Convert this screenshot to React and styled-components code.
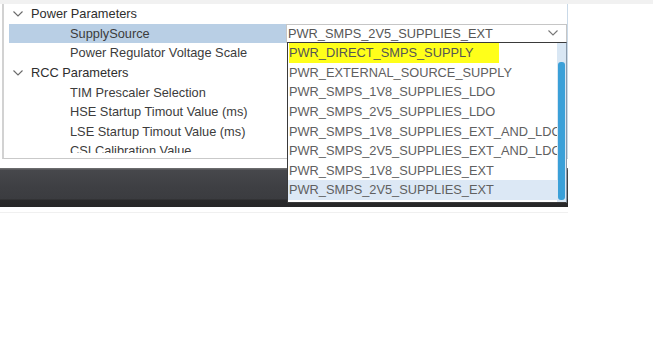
import React from 'react'
import styled, { createGlobalStyle } from 'styled-components'

const GlobalStyle = createGlobalStyle`
  html, body {
    margin: 0;
    padding: 0;
    background: #ffffff;
  }
  body {
    font-family: "Liberation Sans", Arial, sans-serif;
    font-size: 12.8px;
  }
`

const ROW = 19.6

const Page = styled.div`
  width: 653px;
  height: 341px;
  overflow: hidden;
  background: #fff;
`

const TopStrip = styled.div`
  height: 4px;
  background: #f1f1f1;
`

const Shot = styled.div`
  position: relative;
  width: 568px;
`

const Panel = styled.div`
  margin-left: 2px;
  padding-bottom: 5px;
  border-left: 2px solid #d2d2d2;
  border-bottom: 1px solid #c9c9c9;
  border-right: 1px solid #c9d9e8;
  background: #fff;
`

const Tree = styled.div`
  height: 149px;
  overflow: hidden;
`

const Row = styled.div`
  display: grid;
  grid-template-columns: 277px 1fr;
  height: ${ROW}px;
  padding-left: 5px;
  align-items: stretch;
`

const Label = styled.div`
  display: flex;
  align-items: center;
  padding-left: ${(p) => (p.$child ? 61 : 3)}px;
  background: ${(p) => (p.$selected ? '#b9cfe5' : 'transparent')};
  color: ${(p) => (p.$child ? '#3c3c3c' : '#2e2e2e')};
  white-space: nowrap;
`

const Toggle = styled.svg`
  width: 10px;
  height: 6px;
  margin-right: 8px;
  margin-left: 1px;
`

const Value = styled.div`
  display: flex;
`

const Combo = styled.div`
  flex: 1;
  display: flex;
  align-items: center;
  justify-content: space-between;
  border: 1px solid #c6c6c6;
  padding: 0 8px 0 1px;
  color: #565656;
  background: #fff;
`

const DarkBar = styled.div`
  margin-top: 9px;
  height: 39px;
  background: linear-gradient(
    to bottom,
    #6b6b6d 0px,
    #6b6b6d 1px,
    #47484c 2px,
    #3e3f43 20px,
    #3b3c40 31px,
    #2a2a2b 32px,
    #262627 39px
  );
`

const BottomLine = styled.div`
  margin-top: 5px;
  height: 1px;
  background: #f0f0f0;
`

const List = styled.div`
  position: absolute;
  left: 287px;
  top: 38px;
  width: 278px;
  height: ${8 * ROW + 2}px;
  border: 1px solid #3a3a3a;
  border-right-color: #8a9aaa;
  background: #fff;
  display: flex;
`

const Items = styled.div`
  flex: 1;
  min-width: 0;
  overflow: hidden;
  display: flex;
  flex-direction: column;
`

const Item = styled.div`
  height: ${ROW}px;
  flex-shrink: 0;
  display: flex;
  align-items: center;
  padding-left: 1px;
  color: #606060;
  white-space: nowrap;
  overflow: hidden;
  background: ${(p) => (p.$selected ? '#dce8f5' : 'transparent')};
`

const Mark = styled.span`
  display: flex;
  align-items: center;
  height: 100%;
  width: 210px;
  flex-shrink: 0;
  background: #ffff1a;
  color: #555;
`

const Track = styled.div`
  width: 9px;
  flex-shrink: 0;
  box-sizing: border-box;
  background: #d9e7f4;
  padding: 19px 1px 2px 1px;
  display: flex;
`

const Thumb = styled.div`
  flex: 1;
  background: #3ba0d8;
  border-radius: 3px;
`

const Chevron = ({ color = '#777' }) => (
  <svg width="10" height="6" viewBox="0 0 10 6">
    <path d="M0.5 0.5 L5 5 L9.5 0.5" fill="none" stroke={color} strokeWidth="1.1" />
  </svg>
)

const options = [
  'PWR_DIRECT_SMPS_SUPPLY',
  'PWR_EXTERNAL_SOURCE_SUPPLY',
  'PWR_SMPS_1V8_SUPPLIES_LDO',
  'PWR_SMPS_2V5_SUPPLIES_LDO',
  'PWR_SMPS_1V8_SUPPLIES_EXT_AND_LDO',
  'PWR_SMPS_2V5_SUPPLIES_EXT_AND_LDO',
  'PWR_SMPS_1V8_SUPPLIES_EXT',
  'PWR_SMPS_2V5_SUPPLIES_EXT',
]

const rows = [
  { text: 'Power Parameters', group: true },
  { text: 'SupplySource', selected: true, value: 'PWR_SMPS_2V5_SUPPLIES_EXT' },
  { text: 'Power Regulator Voltage Scale' },
  { text: 'RCC Parameters', group: true },
  { text: 'TIM Prescaler Selection' },
  { text: 'HSE Startup Timout Value (ms)' },
  { text: 'LSE Startup Timout Value (ms)' },
  { text: 'CSI Calibration Value' },
]

export default function App() {
  return (
    <Page>
      <GlobalStyle />
      <TopStrip />
      <Shot>
        <Panel>
          <Tree>
            {rows.map((r) => (
              <Row key={r.text}>
                <Label $child={!r.group} $selected={r.selected}>
                  {r.group && (
                    <Toggle viewBox="0 0 10 6">
                      <path d="M0.5 0.5 L5 5 L9.5 0.5" fill="none" stroke="#6a6a6a" strokeWidth="1.1" />
                    </Toggle>
                  )}
                  {r.text}
                </Label>
                <Value>
                  {r.value && (
                    <Combo>
                      {r.value}
                      <Chevron />
                    </Combo>
                  )}
                </Value>
              </Row>
            ))}
          </Tree>
        </Panel>
        <DarkBar />
        <BottomLine />
        <List>
          <Items>
            {options.map((o, i) => (
              <Item key={o} $selected={i === options.length - 1}>
                {i === 0 ? <Mark>{o}</Mark> : o}
              </Item>
            ))}
          </Items>
          <Track>
            <Thumb />
          </Track>
        </List>
      </Shot>
    </Page>
  )
}
